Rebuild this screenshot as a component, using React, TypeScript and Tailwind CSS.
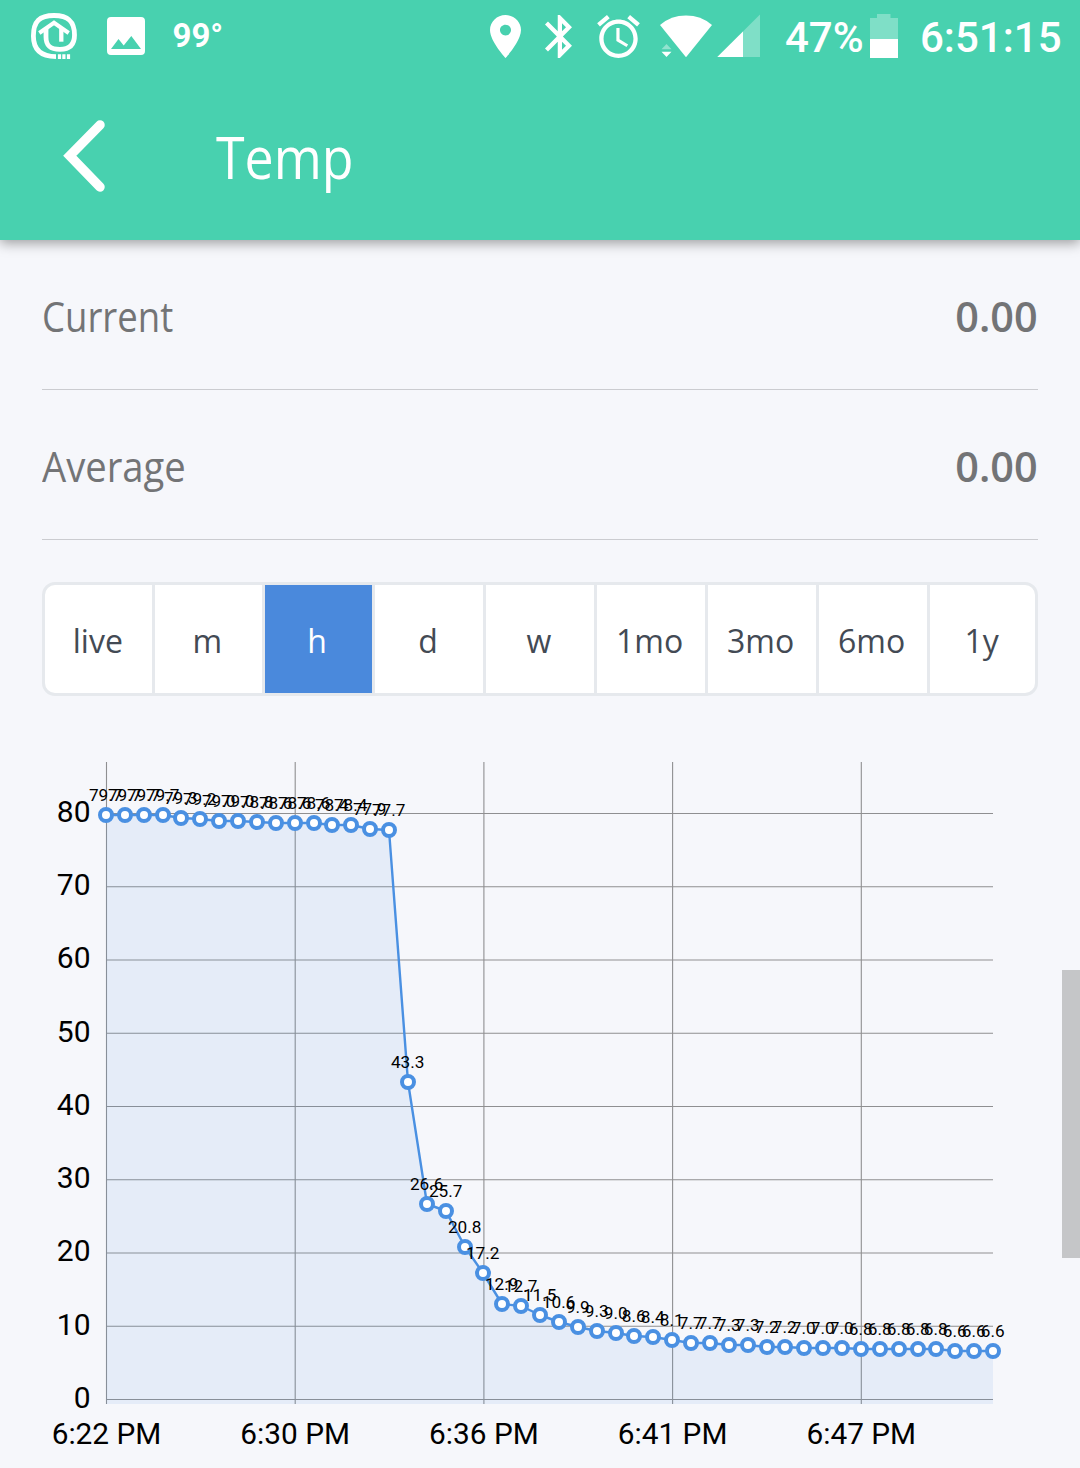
import React from "react";

const values = [
  79.7, 79.7, 79.7, 79.7, 79.3, 79.2, 79.0, 79.0, 78.8, 78.64, 78.64, 78.64, 78.4, 78.4, 77.9, 77.7,
  43.3, 26.6, 25.7, 20.84, 17.2, 12.94, 12.7, 11.5, 10.6, 9.9, 9.3, 9.0, 8.64, 8.44, 8.1, 7.7,
  7.7, 7.349, 7.349, 7.2, 7.2, 7.0, 7.0, 7.0, 6.8, 6.8, 6.8, 6.8, 6.8, 6.6, 6.6, 6.6,
];
const times = ["6:22 PM", "6:30 PM", "6:36 PM", "6:41 PM", "6:47 PM"];
const ticks = [0, 10, 20, 30, 40, 50, 60, 70, 80];

// Chart coordinates are in pixels of the 1080 x 728 chart area.
const LEFT = 106;
const RIGHT = 993;
const TOP = 22;
const BOTTOM = 664;
const ZERO = 659.5;
const STEP = (RIGHT - LEFT) / (values.length - 1);
const yOf = (v: number) => ZERO - v * 7.325;

function Chart() {
  const pts = values.map((v, i) => ({ v, x: Math.round(LEFT + i * STEP), y: Math.round(yOf(v) - 0.25) }));
  const line = pts.map((p) => `${p.x},${p.y}`).join(" ");
  return (
    <svg className="block h-[728px] w-[1080px] font-[Roboto,sans-serif]" viewBox="0 0 1080 728">
      <g stroke="#8f8f91" strokeWidth="1.1">
        {ticks.map((t) => (
          <line key={t} x1={LEFT} x2={RIGHT} y1={yOf(t)} y2={yOf(t)} />
        ))}
        {times.map((t, i) => (
          <line key={t} x1={LEFT + 0.5 + i * 188.7} x2={LEFT + 0.5 + i * 188.7} y1={TOP} y2={BOTTOM} />
        ))}
      </g>
      <polygon points={`${LEFT},${BOTTOM} ${line} ${RIGHT},${BOTTOM}`} fill="#4a90e2" fillOpacity="0.1" />
      <polyline points={line} fill="none" stroke="#4a90e2" strokeWidth="2.4" strokeLinejoin="round" />
      <g fill="#fff" stroke="#4a90e2" strokeWidth="4">
        {pts.map((p, i) => (
          <circle key={i} cx={p.x} cy={p.y} r="6" />
        ))}
      </g>
      <g fontSize="17.2" textAnchor="middle">
        {pts.map((p, i) => (
          <text key={i} x={p.x - 0.3} y={p.y - 14}>{p.v.toFixed(1)}</text>
        ))}
      </g>
      <g fontSize="30" textAnchor="end">
        {ticks.map((t) => (
          <text key={t} x="90.5" y={yOf(t) + 8.4}>{t}</text>
        ))}
      </g>
      <g fontSize="29.800" textAnchor="middle">
        {times.map((t, i) => (
          <text key={t} x={LEFT + 0.5 + i * 188.7} y="704">{t}</text>
        ))}
      </g>
    </svg>
  );
}

function StatusBar() {
  return (
    <div className="flex h-[72px] items-start text-white">
      <svg className="ml-[30px] mt-3 h-12 w-12 shrink-0" viewBox="30 12 48 48" fill="none" stroke="#fff">
        <path d="M56 56.6C41 56.5 33.4 49.5 33.4 36C33.4 21.5 39.5 15.5 54 15.5C68.500 15.500 74.500 21.500 74.500 35C74.500 44.500 70 49.300 60 49.300C50.500 49.300 46 46 46 37V29" strokeWidth="4.800" />
        <path d="M39.300 33L54 22.800L68.700 33" strokeWidth="4" />
        <path d="M61.300 28V41.700" strokeWidth="4.300" />
        <path d="M59.500 54.200V59M63.900 54.200V59M68.500 54.200V59" strokeWidth="3.200" />
      </svg>
      <svg className="ml-[29px] mt-[17px] h-[38px] w-[38px] shrink-0" viewBox="0 0 38 38">
        <path fill="#fff" fillRule="evenodd" d="M4 0H34Q38 0 38 4V34Q38 38 34 38H4Q0 38 0 34V4Q0 0 4 0ZM4 32H34L24.300 19L16.700 28.500L11.500 22Z" />
      </svg>
      <span className="ml-[27.5px] mt-5 w-[60.5px] font-[Roboto,sans-serif] text-[33px] leading-8 font-bold">99°</span>
      <svg className="ml-[257px] mt-[15px] h-[43px] w-[31px] shrink-0" viewBox="5 2 14 20" preserveAspectRatio="none" fill="#fff">
        <path d="M12 2C8.130 2 5 5.130 5 9c0 5.250 7 13 7 13s7-7.750 7-13c0-3.870-3.130-7-7-7zm0 9.500c-1.380 0-2.500-1.120-2.500-2.500s1.120-2.500 2.500-2.500 2.500 1.120 2.500 2.500-1.120 2.500-2.500 2.500z" />
      </svg>
      <svg className="ml-[24px] mt-[15px] h-[43px] w-[27px] shrink-0" viewBox="5 2 12.71 20" preserveAspectRatio="none" fill="#fff">
        <path d="M17.710 7.710L12 2h-1v7.590L6.410 5 5 6.410 10.590 12 5 17.590 6.410 19 11 14.410V22h1l5.710-5.710-4.300-4.290 4.300-4.290zM13 5.830l1.880 1.880L13 9.590V5.830zm1.880 10.460L13 18.170v-3.760l1.880 1.880z" />
      </svg>
      <svg className="ml-[25px] mt-[15px] h-[43px] w-[43px] shrink-0" viewBox="2 1.860 20 20.140" fill="#fff">
        <path d="M22 5.720l-4.600-3.860-1.290 1.530 4.600 3.860L22 5.720zM7.880 3.390L6.600 1.860 2 5.710l1.290 1.530 4.590-3.850zM12.500 8H11v6l4.750 2.850.75-1.230-4-2.370V8zM12 4c-4.970 0-9 4.030-9 9s4.020 9 9 9c4.970 0 9-4.030 9-9s-4.030-9-9-9zm0 16c-3.870 0-7-3.130-7-7s3.130-7 7-7 7 3.130 7 7-3.130 7-7 7z" />
      </svg>
      <svg className="ml-5 mt-3 h-12 w-[52px] shrink-0" viewBox="660 12 52 48" fill="#fff">
        <path d="M686 57.300L660 25Q671 15.600 686 15.600T712 25Z" />
        <path d="M666.500 44L671.500 49.300H661.500Z" fillOpacity=".4" />
        <path d="M666.500 57L671.500 51.700H661.500Z" />
      </svg>
      <svg className="ml-[5px] mt-3 h-12 w-[43px] shrink-0" viewBox="717 12 43 48" fill="#fff">
        <path d="M717.300 57H760V14.400Z" fillOpacity=".3" />
        <path d="M717.300 57H743V31.400Z" />
      </svg>
      <span className="ml-[25px] mt-4 w-[85px] shrink-0 font-[Roboto,sans-serif] text-[42px] leading-[44px] font-medium whitespace-nowrap">47%</span>
      <svg className="mt-[14px] h-11 w-7 shrink-0" viewBox="0 0 28 44" fill="#fff">
        <path d="M7 0H20.500V4H28V25H0V4H7Z" fillOpacity=".3" />
        <path d="M0 25H28V44H0Z" />
      </svg>
      <span className="ml-[22px] mt-4 shrink-0 font-[Roboto,sans-serif] text-[42px] leading-[44px] font-medium whitespace-nowrap">6:51:15</span>
    </div>
  );
}

function Reading({ label, value, fit }: { label: string; value: string; fit: string }) {
  return (
    <div className="mx-[42px] flex h-[150px] items-center justify-between border-b border-[#cbccd0] pt-px text-[42px] text-[#737476]">
      <span className={"inline-block origin-left " + fit}>{label}</span>
      <span className="inline-block origin-right scale-x-[0.985] font-semibold">{value}</span>
    </div>
  );
}

const ranges = ["live", "m", "h", "d", "w", "1mo", "3mo", "6mo", "1y"];

export default function App() {
  return (
    <div className="relative flex h-[1468px] w-[1080px] flex-col overflow-hidden bg-[#f6f7fb] font-['Open_Sans',sans-serif]">
      <header className="relative z-10 h-[240px] shrink-0 bg-[#48d1af] shadow-[0_3px_12px_rgba(0,0,0,0.38)]">
        <StatusBar />
        <div className="flex h-[168px] items-center">
          <svg className="ml-[60px] h-20 w-[50px]" viewBox="60 116 50 80" fill="none">
            <path d="M100 125L69.800 155.700L100 187" stroke="#fff" strokeWidth="9.500" strokeLinecap="round" />
          </svg>
          <h1 className="ml-[106px] origin-left scale-x-[0.88] text-[59px] text-white">Temp</h1>
        </div>
      </header>
      <main className="flex flex-col">
        <Reading label="Current" value="0.00" fit="scale-x-[0.87]" />
        <Reading label="Average" value="0.00" fit="scale-x-[0.91]" />
        <div className="mx-[42px] mt-[42px] grid h-[114px] grid-cols-[110px_110px_110px_111px_111px_111px_111px_111px_105px] overflow-hidden rounded-[13px] border-[3px] border-[#e6e9ed] bg-white text-[33px] text-[#434a54]">
          {ranges.map((r) => (
            <button
              key={r}
              className={
                "flex items-center justify-center border-[#e6e9ed] pt-1 pr-[2px] " +
                (r === "1y" ? "" : "border-r-[3px] ") +
                (r === "h" ? "bg-[#4a89dc] text-white" : "")
              }
            >
              <span className="inline-block scale-x-[0.97]">{r}</span>
            </button>
          ))}
        </div>
        <div className="mt-11">
          <Chart />
        </div>
      </main>
      <div className="absolute top-[970px] right-0 h-72 w-[18px] bg-[#c5c6c8]" />
    </div>
  );
}
